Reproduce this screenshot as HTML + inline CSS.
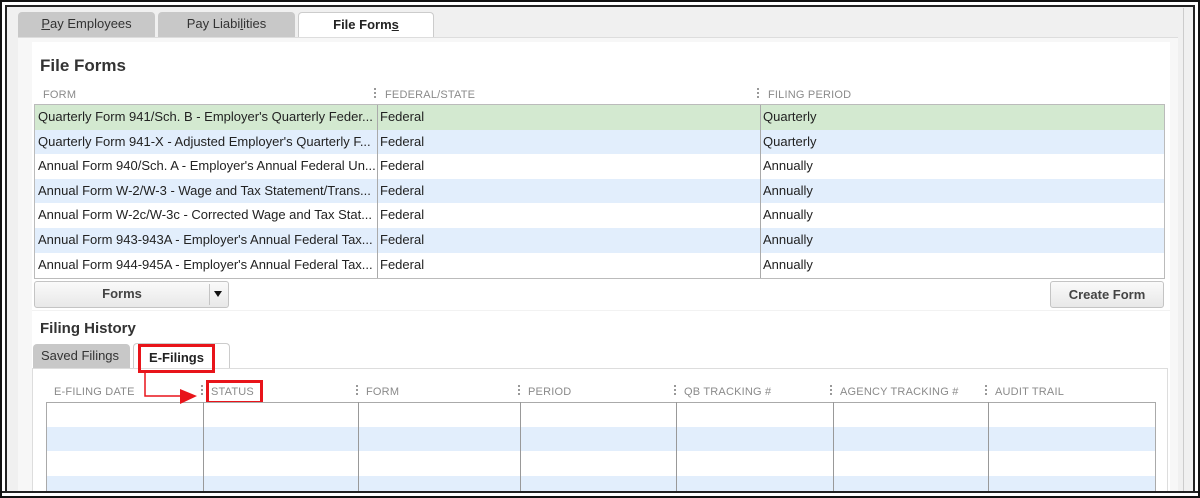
<!DOCTYPE html>
<html><head><style>
*{margin:0;padding:0;box-sizing:border-box}
html,body{width:1200px;height:498px;overflow:hidden}
body{background:#fff;font-family:"Liberation Sans",Arial,sans-serif;position:relative}
.a{position:absolute}
.hdr{position:absolute;font-size:11px;color:#8a8a8a;letter-spacing:.2px}
.sep{position:absolute;width:2px;height:10px;border-left:2px dotted #999}
.row{position:absolute;left:35px;width:1129px;height:24.6px}
</style></head><body>
<div class="a" style="left:0;top:0;width:1200px;height:498px;border:2px solid #111"></div>
<div class="a" style="left:5px;top:5px;width:1190px;height:488px;border:2px solid #222;background:#f0f0f0"></div>
<div class="a" style="left:1183px;top:8px;width:1px;height:484px;background:#ccc"></div>
<div class="a" style="left:18px;top:12px;width:137px;height:25px;background:#c8c8c8;border-radius:4px 4px 0 0;font-size:13px;color:#333;text-align:center;line-height:24px"><u>P</u>ay Employees</div>
<div class="a" style="left:158px;top:12px;width:137px;height:25px;background:#c8c8c8;border-radius:4px 4px 0 0;font-size:13px;color:#333;text-align:center;line-height:24px">Pay Liabi<u>l</u>ities</div>
<div class="a" style="left:298px;top:12px;width:136px;height:26px;background:#fff;border:1px solid #ccc;border-bottom:none;border-radius:4px 4px 0 0;font-size:13px;font-weight:bold;color:#222;text-align:center;line-height:23px">File Form<u>s</u></div>
<div class="a" style="left:18px;top:37px;width:1160px;height:454px;background:#f7f7f7;border-top:1px solid #ddd"></div>
<div class="a" style="left:32px;top:42px;width:1138px;height:449px;background:#fff"></div>
<div class="a" style="left:40px;top:56px;font-size:17px;font-weight:bold;color:#333">File Forms</div>
<div class="hdr" style="left:43px;top:89px">FORM</div>
<div class="sep" style="left:374px;top:88px"></div>
<div class="hdr" style="left:385px;top:89px">FEDERAL/STATE</div>
<div class="sep" style="left:757px;top:88px"></div>
<div class="hdr" style="left:768px;top:89px">FILING PERIOD</div>
<div class="a" style="left:34px;top:104px;width:1131px;height:175px;border:1px solid #bbb;background:#fff"></div>
<div class="row" style="top:105px;background:#d3e9d0"></div>
<div class="row" style="top:129.6px;background:#e2eefc"></div>
<div class="row" style="top:178.8px;background:#e2eefc"></div>
<div class="row" style="top:228px;background:#e2eefc"></div>
<div class="a" style="left:377px;top:105px;width:1px;height:173px;background:#aaa"></div>
<div class="a" style="left:760px;top:105px;width:1px;height:173px;background:#aaa"></div>
<div style="position:absolute;left:38px;top:105px;font-size:13px;color:#222;line-height:24.6px;white-space:nowrap">
Quarterly Form 941/Sch. B - Employer's Quarterly Feder...<br>Quarterly Form 941-X - Adjusted Employer's Quarterly F...<br>Annual Form 940/Sch. A - Employer's Annual Federal Un...<br>Annual Form W-2/W-3 - Wage and Tax Statement/Trans...<br>Annual Form W-2c/W-3c - Corrected Wage and Tax Stat...<br>Annual Form 943-943A - Employer's Annual Federal Tax...<br>Annual Form 944-945A - Employer's Annual Federal Tax...</div>
<div style="position:absolute;left:380px;top:105px;font-size:13px;color:#222;line-height:24.6px">Federal<br>Federal<br>Federal<br>Federal<br>Federal<br>Federal<br>Federal</div>
<div style="position:absolute;left:763px;top:105px;font-size:13px;color:#222;line-height:24.6px">Quarterly<br>Quarterly<br>Annually<br>Annually<br>Annually<br>Annually<br>Annually</div>
<div class="a" style="left:34px;top:281px;width:195px;height:27px;border:1px solid #c4c4c4;border-radius:3px;background:linear-gradient(#fafafa,#e8e8e8)"></div>
<div class="a" style="left:34px;top:281px;width:176px;height:27px;font-size:13px;font-weight:bold;color:#444;text-align:center;line-height:26px">Forms</div>
<div class="a" style="left:209px;top:284px;width:1px;height:21px;background:#c4c4c4"></div>
<div class="a" style="left:214px;top:291px;width:0;height:0;border-left:4px solid transparent;border-right:4px solid transparent;border-top:6px solid #111"></div>
<div class="a" style="left:1050px;top:281px;width:114px;height:27px;border:1px solid #c4c4c4;border-radius:3px;background:linear-gradient(#fafafa,#e8e8e8);font-size:13px;font-weight:bold;color:#444;text-align:center;line-height:25px">Create Form</div>
<div class="a" style="left:32px;top:310px;width:1138px;height:1px;background:#f2f2f2"></div>
<div class="a" style="left:40px;top:320px;font-size:15px;font-weight:bold;color:#333">Filing History</div>
<div class="a" style="left:33px;top:344px;width:97px;height:25px;background:#c8c8c8;border-radius:4px 4px 0 0;font-size:13px;color:#333;line-height:23px;padding-left:8px">Saved Filings</div>
<div class="a" style="left:133px;top:343px;width:97px;height:27px;background:#fff;border:1px solid #ccc;border-bottom:none;border-radius:4px 4px 0 0"></div>
<div class="a" style="left:32px;top:368px;width:1136px;height:123px;border:1px solid #ddd;border-bottom:none;background:#fff"></div>
<div class="a" style="left:134px;top:369px;width:95px;height:2px;background:#fff"></div>
<div class="a" style="left:138px;top:344px;width:77px;height:29px;border:3px solid #e8141a;font-size:13px;font-weight:bold;color:#222;text-align:center;line-height:21px">E-Filings</div>
<div class="hdr" style="left:54px;top:386px">E-FILING DATE</div>
<div class="sep" style="left:201px;top:385px"></div>
<div class="hdr" style="left:211px;top:386px">STATUS</div>
<div class="a" style="left:206px;top:380px;width:57px;height:24px;border:3px solid #e8141a"></div>
<div class="sep" style="left:356px;top:385px"></div><div class="hdr" style="left:366px;top:386px">FORM</div>
<div class="sep" style="left:518px;top:385px"></div><div class="hdr" style="left:528px;top:386px">PERIOD</div>
<div class="sep" style="left:674px;top:385px"></div><div class="hdr" style="left:684px;top:386px">QB TRACKING #</div>
<div class="sep" style="left:830px;top:385px"></div><div class="hdr" style="left:840px;top:386px">AGENCY TRACKING #</div>
<div class="sep" style="left:985px;top:385px"></div><div class="hdr" style="left:995px;top:386px">AUDIT TRAIL</div>
<div class="a" style="left:46px;top:402px;width:1110px;height:89px;border:1px solid #aaa;border-bottom:none;background:#fff"></div>
<div class="a" style="left:47px;top:427px;width:1108px;height:24px;background:#e2eefc"></div>
<div class="a" style="left:47px;top:476px;width:1108px;height:15px;background:#e2eefc"></div>
<div class="a" style="left:203px;top:402px;width:1px;height:89px;background:#999"></div>
<div class="a" style="left:358px;top:402px;width:1px;height:89px;background:#999"></div>
<div class="a" style="left:520px;top:402px;width:1px;height:89px;background:#999"></div>
<div class="a" style="left:676px;top:402px;width:1px;height:89px;background:#999"></div>
<div class="a" style="left:833px;top:402px;width:1px;height:89px;background:#999"></div>
<div class="a" style="left:988px;top:402px;width:1px;height:89px;background:#999"></div>
<svg class="a" style="left:0;top:0" width="1200" height="498"><path d="M145 373 V396 H187" stroke="#e8141a" stroke-width="1.5" fill="none"/><path d="M180 389 L197 396 L180 404 Z" fill="#e8141a"/></svg>
<div class="a" style="left:0;top:491px;width:1200px;height:7px;background:#fff;border-top:2px solid #222;border-bottom:2px solid #111"></div>
<div class="a" style="left:0;top:0;width:2px;height:498px;background:#111"></div>
<div class="a" style="left:1198px;top:0;width:2px;height:498px;background:#111"></div>
</body></html>
